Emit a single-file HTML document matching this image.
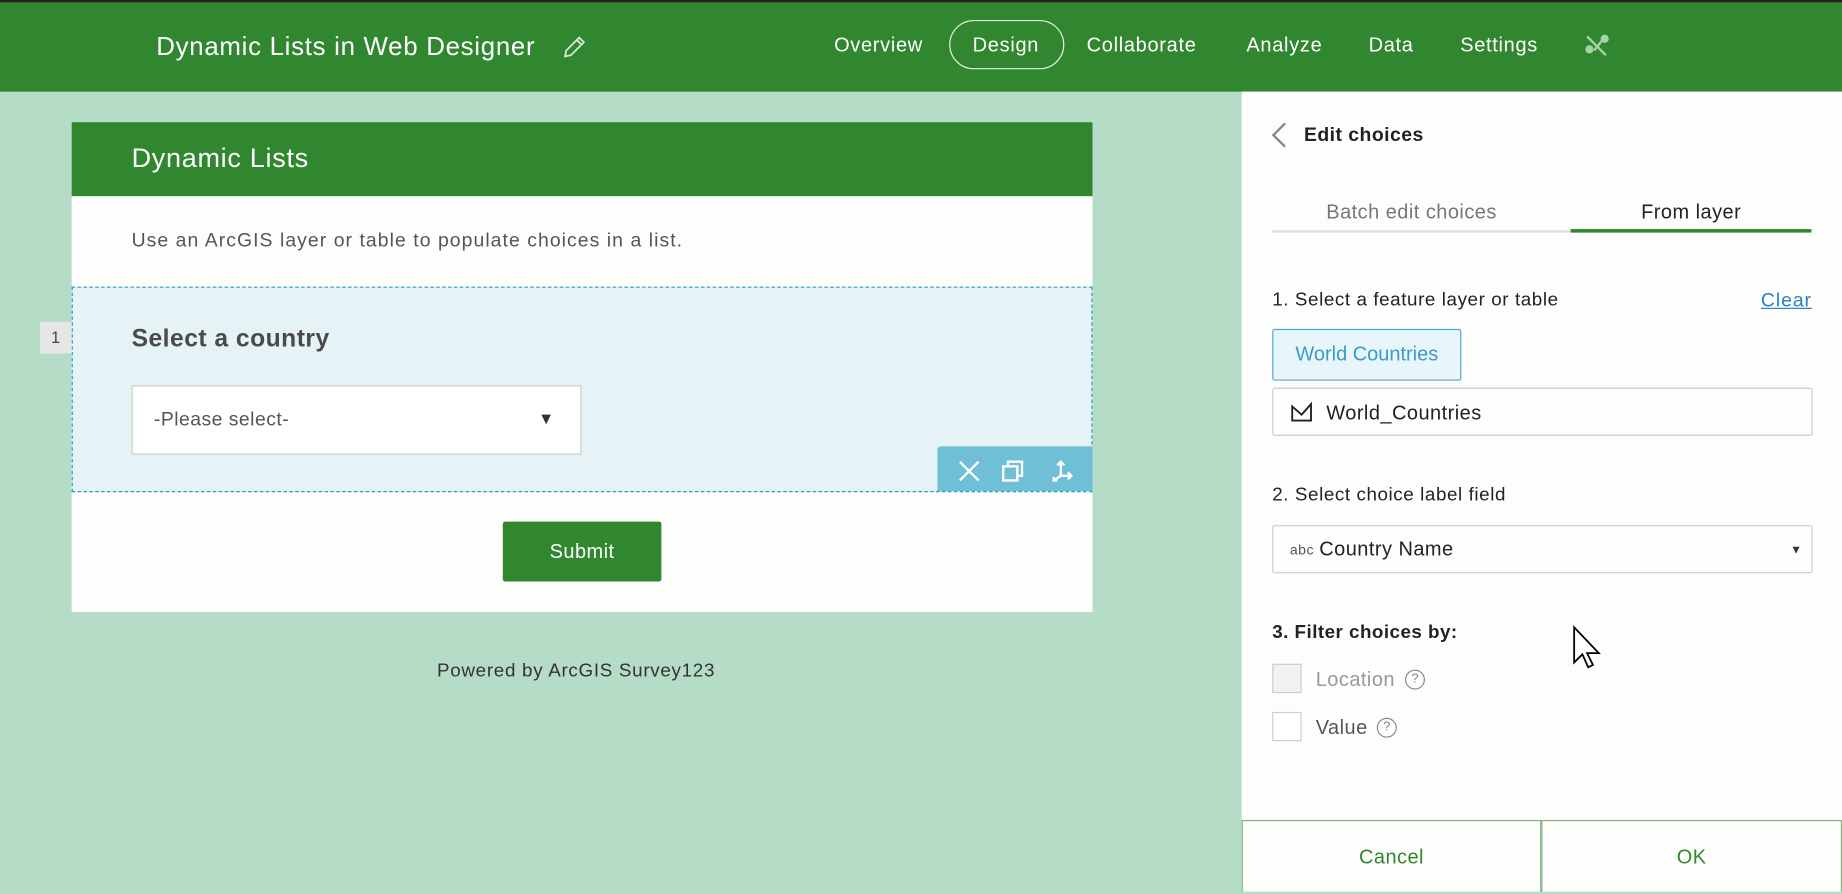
<!DOCTYPE html>
<html><head><meta charset="utf-8"><style>
html,body{margin:0;padding:0;width:1842px;height:892px;overflow:hidden;background:#b5dcc6;font-family:"Liberation Sans",sans-serif}
#w{position:absolute;left:0;top:0;width:1568px;height:759px;transform:scale(1.17474);transform-origin:0 0;background:#b5dcc6;letter-spacing:0.4px}
.a{position:absolute;white-space:nowrap}
.top{left:0;top:0;width:1568px;height:78px;background:#318730;border-top:2px solid #222;box-sizing:border-box}
.nav{color:#fff;font-size:17px;top:29px;letter-spacing:0.6px}
.panel{left:1057px;top:78px;width:511px;height:681px;background:#fdfdfc}
.card{left:61px;top:104px;width:869px;height:417px;background:#fdfdfc}
</style></head><body><div id="w">
<div class="a top"></div>
<div class="a" style="left:133px;top:27px;color:#fff;font-size:22px;letter-spacing:0.6px">Dynamic Lists in Web Designer</div>
<svg class="a" style="left:478px;top:29px" width="22" height="22" viewBox="0 0 22 22" fill="none" stroke="#d8ecd8" stroke-width="1.5"><path d="M3 19l1-5L15 3l4 4L8 18z M13 5l4 4"/></svg>
<div class="a nav" style="left:710px">Overview</div>
<div class="a" style="left:808px;top:17px;width:98px;height:42px;border:1px solid #e8f3e8;border-radius:21px;box-sizing:border-box"></div>
<div class="a nav" style="left:828px">Design</div>
<div class="a nav" style="left:925px">Collaborate</div>
<div class="a nav" style="left:1061px">Analyze</div>
<div class="a nav" style="left:1165px">Data</div>
<div class="a nav" style="left:1243px">Settings</div>
<svg class="a" style="left:1347px;top:27px" width="24" height="24" viewBox="0 0 24 24" stroke="#a9d1a8" stroke-width="2" fill="#a9d1a8"><path d="M4 4l16 16M10 16l8-10"/><circle cx="19" cy="6" r="2.5"/><circle cx="6" cy="15" r="2.5"/></svg>

<div class="a card"></div>
<div class="a" style="left:61px;top:104px;width:869px;height:63px;background:#318730"></div>
<div class="a" style="left:112px;top:121px;color:#fff;font-size:23px;letter-spacing:0.6px">Dynamic Lists</div>
<div class="a" style="left:112px;top:196px;color:#555;font-size:16.5px;letter-spacing:0.9px">Use an ArcGIS layer or table to populate choices in a list.</div>
<div class="a" style="left:61px;top:244px;width:869px;height:175px;background:#e5f3f6;border:1px dashed #2a9cc4;box-sizing:border-box"></div>
<div class="a" style="left:34px;top:274px;width:27px;height:27px;background:#e6e6e6;color:#444;font-size:14px;text-align:center;line-height:27px">1</div>
<div class="a" style="left:112px;top:277px;color:#4a4a4a;font-size:21px;font-weight:bold">Select a country</div>
<div class="a" style="left:112px;top:328px;width:383px;height:59px;background:#fff;border:1px solid #ccc;box-sizing:border-box"></div>
<div class="a" style="left:131px;top:348px;color:#555;font-size:16.5px">-Please select-</div>
<div class="a" style="left:458px;top:348px;color:#333;font-size:14px">▼</div>
<div class="a" style="left:798px;top:380px;width:132px;height:38px;background:#6fbfd6;border-radius:3px 0 0 0"></div>
<svg class="a" style="left:813px;top:390px" width="105" height="22" viewBox="0 0 105 22" fill="none" stroke="#fff" stroke-width="2"><path d="M4 3l16 16M20 3L4 19"/><rect x="41" y="7" width="12" height="12"/><path d="M45 6V3h12v12h-3"/><path d="M90 3v12h9M87 6l3-3 3 3M96 12l3 3-3 3M90 15l-6 4M84 16v3h3"/></svg>
<div class="a" style="left:428px;top:444px;width:135px;height:51px;background:#318730;border-radius:2px;color:#fff;font-size:17px;text-align:center;line-height:51px">Submit</div>
<div class="a" style="left:372px;top:563px;color:#333;font-size:16px;letter-spacing:0.6px">Powered by ArcGIS Survey123</div>

<div class="a panel"></div>
<svg class="a" style="left:1081px;top:103px" width="16" height="24" viewBox="0 0 16 24" fill="none" stroke="#888" stroke-width="2"><path d="M13 2L3 12l10 10"/></svg>
<div class="a" style="left:1110px;top:106px;color:#222;font-size:16.5px;font-weight:bold">Edit choices</div>
<div class="a" style="left:1129px;top:171px;color:#777;font-size:17px">Batch edit choices</div>
<div class="a" style="left:1397px;top:171px;color:#222;font-size:17px">From layer</div>
<div class="a" style="left:1083px;top:196px;width:454px;height:2px;background:#ddd"></div>
<div class="a" style="left:1337px;top:195px;width:205px;height:3px;background:#318730"></div>
<div class="a" style="left:1083px;top:247px;color:#222;font-size:16px;letter-spacing:0.5px">1. Select a feature layer or table</div>
<div class="a" style="left:1499px;top:247px;color:#2a7fc9;font-size:16.5px;text-decoration:underline;letter-spacing:0.8px">Clear</div>
<div class="a" style="left:1083px;top:280px;width:161px;height:44px;background:#e8f6fc;border:1px solid #4ba8cf;border-radius:2px;box-sizing:border-box;color:#3a9cc4;font-size:17px;text-align:center;line-height:42px;letter-spacing:0">World Countries</div>
<div class="a" style="left:1083px;top:330px;width:460px;height:41px;border:1px solid #ccc;border-radius:2px;box-sizing:border-box"></div>
<svg class="a" style="left:1098px;top:342px" width="20" height="18" viewBox="0 0 20 18" fill="none" stroke="#222" stroke-width="1.6"><path d="M2 4v12h16V2l-8 9z"/></svg>
<div class="a" style="left:1129px;top:342px;color:#222;font-size:17px">World_Countries</div>
<div class="a" style="left:1083px;top:413px;color:#222;font-size:16px;letter-spacing:0.5px">2. Select choice label field</div>
<div class="a" style="left:1083px;top:447px;width:460px;height:41px;border:1px solid #ccc;border-radius:2px;box-sizing:border-box"></div>
<div class="a" style="left:1098px;top:461px;color:#555;font-size:12px">abc</div>
<div class="a" style="left:1123px;top:458px;color:#222;font-size:17px">Country Name</div>
<div class="a" style="left:1524px;top:463px;color:#333;font-size:10px">▼</div>
<div class="a" style="left:1083px;top:530px;color:#222;font-size:16px;font-weight:bold">3. Filter choices by:</div>
<svg class="a" style="left:1338px;top:532px" width="26" height="40" viewBox="0 0 26 40"><path d="M2 2v30l7-7 5 11 4-2-5-10h10z" fill="#fff" stroke="#000" stroke-width="1.5"/></svg>
<div class="a" style="left:1083px;top:565px;width:25px;height:25px;border:1px solid #ccc;background:#f2f2f2;box-sizing:border-box"></div>
<div class="a" style="left:1120px;top:569px;color:#999;font-size:17px">Location</div>
<div class="a" style="left:1196px;top:570px;width:17px;height:17px;border:1.5px solid #888;border-radius:50%;box-sizing:border-box;color:#888;font-size:11px;text-align:center;line-height:14px;letter-spacing:0">?</div>
<div class="a" style="left:1083px;top:606px;width:25px;height:25px;border:1px solid #ccc;background:#fff;box-sizing:border-box"></div>
<div class="a" style="left:1120px;top:610px;color:#555;font-size:17px">Value</div>
<div class="a" style="left:1172px;top:611px;width:17px;height:17px;border:1.5px solid #888;border-radius:50%;box-sizing:border-box;color:#888;font-size:11px;text-align:center;line-height:14px;letter-spacing:0">?</div>
<div class="a" style="left:1057px;top:698px;width:255px;height:61px;border:1px solid #7fb47e;border-bottom:none;box-sizing:border-box;color:#318730;font-size:17px;text-align:center;line-height:62px">Cancel</div>
<div class="a" style="left:1312px;top:698px;width:256px;height:61px;border:1px solid #7fb47e;border-bottom:none;box-sizing:border-box;color:#318730;font-size:17px;text-align:center;line-height:62px">OK</div>
</div></body></html>
